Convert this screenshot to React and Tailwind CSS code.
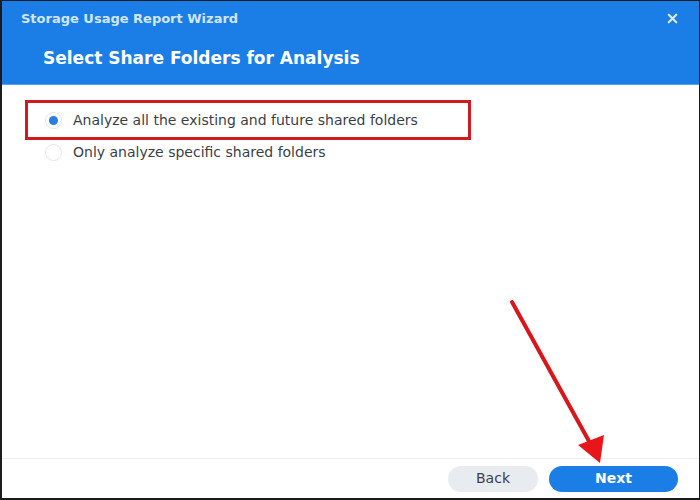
import { X } from 'lucide-react'

// ── Radio option row ────────────────────────────────────────────────────────
function Radio({ checked, label }) {
  return (
    <div className="flex items-center h-[32px]">
      <span className="w-[17px] h-[17px] rounded-full border border-[#e3e6ea] bg-white flex items-center justify-center">
        {checked && <span className="w-[9px] h-[9px] rounded-full bg-[#2a7de1]" />}
      </span>
      <span className="ml-[11px] text-[14px] text-[#3a3f46]">{label}</span>
    </div>
  )
}

export default function App() {
  return (
    <div
      className="w-[700px] h-[500px] bg-[#1c1c1c] pl-[2px] pt-[1px] pr-[1px] pb-[2px]"
      style={{ fontFamily: '"DejaVu Sans", Verdana, sans-serif' }}
    >
      <div className="relative w-full h-full bg-white flex flex-col overflow-hidden">
        {/* Header */}
        <div className="h-[84px] bg-[#1a7ee6] border-b border-[#5aa3ee] relative">
          <div className="pt-[8px] pl-[19px] text-[13px] font-bold text-[#d3e5f8]">Storage Usage Report Wizard</div>
          <div className="pt-[17px] pl-[41px] text-[17px] font-bold text-white">Select Share Folders for Analysis</div>
          <X size={15} strokeWidth={3.5} className="absolute right-[19px] top-[10px] text-[#dce9f8]" />
        </div>

        {/* Body */}
        <div className="flex-1 pt-[19px] pl-[43px]">
          <Radio checked label="Analyze all the existing and future shared folders" />
          <Radio label="Only analyze specific shared folders" />
        </div>

        {/* Footer */}
        <div className="h-[40px] border-t border-[#eceef0] flex items-center justify-end gap-[11px] pr-[21px]">
          <button className="w-[90px] h-[26px] rounded-full bg-[#e8ecf1] text-[14px] text-[#3c4048]">Back</button>
          <button className="w-[129px] h-[26px] rounded-full bg-[#1a7ee6] text-[14px] font-bold text-white">Next</button>
        </div>

        {/* Annotation: highlight box */}
        <div className="absolute left-[23px] top-[99px] w-[446px] h-[40px] border-[3px] border-[#cf1b20]" />

        {/* Annotation: arrow */}
        <svg className="absolute left-0 top-0 pointer-events-none" width="698" height="497">
          <line x1="510" y1="301" x2="588" y2="442" stroke="#d8161b" strokeWidth="4" strokeLinecap="round" />
          <polygon points="576,444 602,434 598,462" fill="#e8161b" />
        </svg>
      </div>
    </div>
  )
}
